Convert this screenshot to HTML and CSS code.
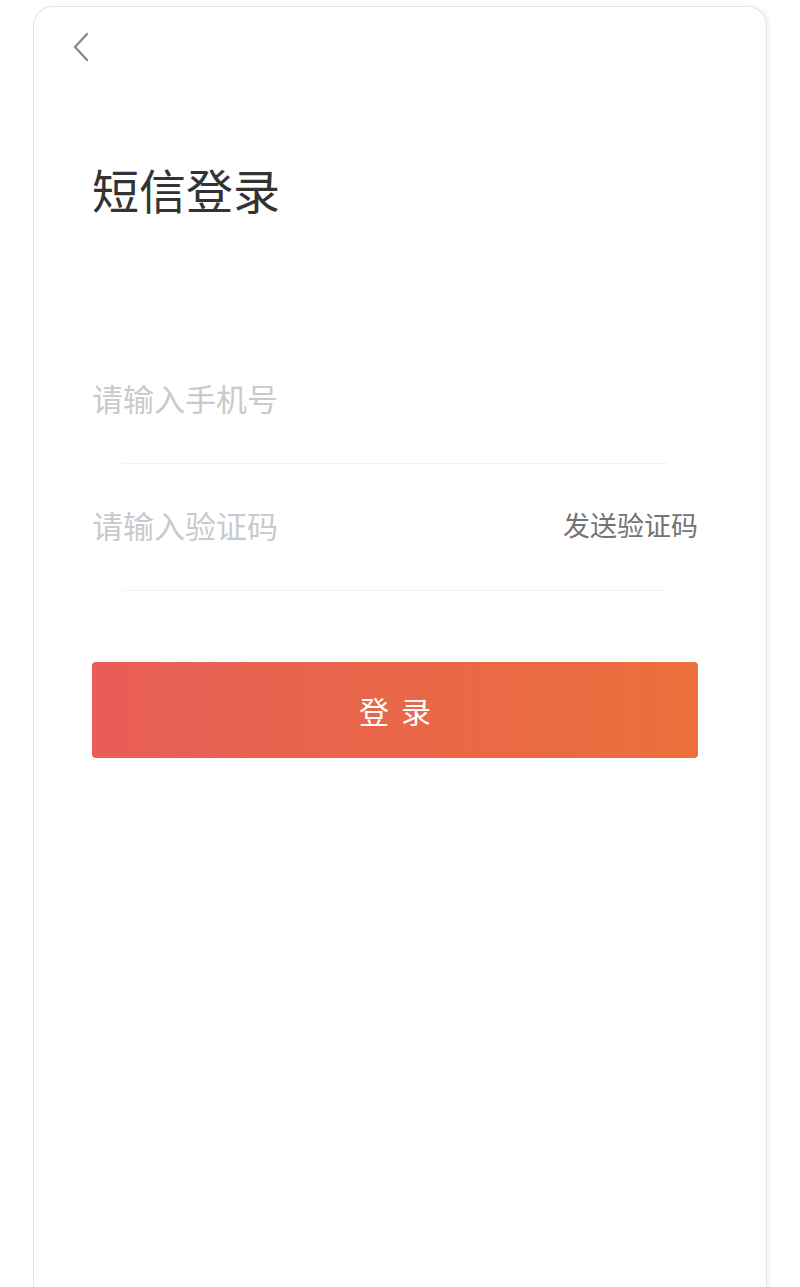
FILE: index.html
```html
<!DOCTYPE html>
<html lang="zh-CN">
  <head>
    <meta charset="UTF-8" />
    <meta name="viewport" content="width=device-width, initial-scale=1.0" />
    <title>短信登录</title>
    <link rel="stylesheet" href="styles.css">
  </head>
  <body>
    <div class="card">
      <a class="back" href="#">
        <svg width="18" height="30" viewBox="0 0 18 30">
          <path d="M15 2 L3 15 L15 28" fill="none" stroke="#8a8a8a" stroke-width="2.4" stroke-linecap="round" stroke-linejoin="round" />
        </svg>
      </a>

      <h1 class="title">短信登录</h1>

      <form class="login-form">
        <div class="field">
          <div class="field-body">
            <input type="tel" placeholder="请输入手机号">
          </div>
        </div>

        <div class="field">
          <div class="field-body">
            <input type="text" placeholder="请输入验证码">
            <span class="send-code">发送验证码</span>
          </div>
        </div>

        <button type="button" class="submit">登录</button>
      </form>
    </div>
  </body>
</html>
```

FILE: styles.css
```css
body {
  margin: 0;
  padding: 0;
  background-color: #ffffff;
  font-family: "Noto Sans CJK SC", "Noto Sans", sans-serif;
}

.card {
  box-sizing: border-box;
  width: 734px;
  min-height: 1320px;
  margin: 6px 0 0 33px;
  padding: 0 68px 0 58px;
  border: 1px solid #e4e4e4;
  border-bottom: none;
  border-radius: 20px 20px 0 0;
  box-shadow: 3px 0 4px rgba(0, 0, 0, 0.05);
}

.back {
  display: block;
  width: 18px;
  height: 30px;
  margin: 25px 0 0 -20px;
}

.back svg {
  display: block;
}

.title {
  margin: 99px 0 0;
  font-size: 47px;
  line-height: 56px;
  font-weight: 400;
  color: #333333;
}

.login-form {
  margin-top: 150px;
}

.field {
  margin-bottom: 30px;
}

.field-body {
  display: flex;
  align-items: center;
  height: 60px;
}

.field::after {
  content: "";
  display: block;
  height: 1px;
  margin: 36px 30px 0;
  background-color: #f3f3f3;
}

.field input {
  flex: 1;
  min-width: 0;
  border: none;
  outline: none;
  padding: 0;
  font-family: inherit;
  font-size: 31px;
  color: #333333;
  background: transparent;
}

.field input::placeholder {
  color: #c9cacd;
}

.send-code {
  font-size: 27px;
  color: #747474;
}

.submit {
  display: block;
  width: 100%;
  height: 96px;
  margin-top: 71px;
  border: none;
  border-radius: 4px;
  background: linear-gradient(to right, #e85d57, #ea703b);
  color: #ffffff;
  font-family: inherit;
  font-size: 30px;
  letter-spacing: 12px;
  text-indent: 12px;
  cursor: pointer;
}
```
